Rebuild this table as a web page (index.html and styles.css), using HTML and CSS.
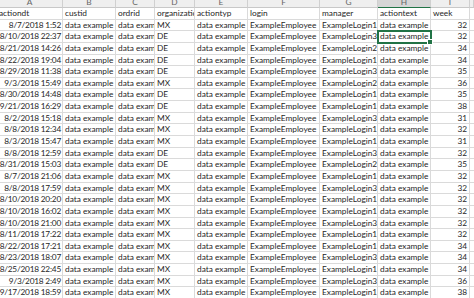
FILE: index.html
```html
<!DOCTYPE html>
<html>
<head>
<meta charset="utf-8">
<link rel="stylesheet" href="styles.css">
</head>
<body>
<div class="sheet">
  <div class="h">A</div><div class="h">B</div><div class="h">C</div><div class="h">D</div><div class="h">E</div><div class="h">F</div><div class="h">G</div><div class="h act">H</div><div class="h">I</div><div class="h"></div>

  <div class="c">actiondt</div><div class="c">custid</div><div class="c">ordrid</div><div class="c">organization</div><div class="c">actiontyp</div><div class="c">login</div><div class="c">manager</div><div class="c">actiontext</div><div class="c">week</div><div class="c"></div>

  <div class="c d">8/7/2018 1:52</div><div class="c">data example</div><div class="c">data example</div><div class="c">MX</div><div class="c r">data example</div><div class="c">ExampleEmployee</div><div class="c">ExampleLogin1</div><div class="c">data example</div><div class="c r">32</div><div class="c"></div>
  <div class="c d">8/10/2018 22:37</div><div class="c">data example</div><div class="c">data example</div><div class="c">DE</div><div class="c r">data example</div><div class="c">ExampleEmployee</div><div class="c">ExampleLogin3</div><div class="c sel">data example</div><div class="c r">32</div><div class="c"></div>
  <div class="c d">8/21/2018 14:26</div><div class="c">data example</div><div class="c">data example</div><div class="c">DE</div><div class="c r">data example</div><div class="c">ExampleEmployee</div><div class="c">ExampleLogin2</div><div class="c">data example</div><div class="c r">34</div><div class="c"></div>
  <div class="c d">8/22/2018 19:04</div><div class="c">data example</div><div class="c">data example</div><div class="c">DE</div><div class="c r">data example</div><div class="c">ExampleEmployee</div><div class="c">ExampleLogin1</div><div class="c">data example</div><div class="c r">34</div><div class="c"></div>
  <div class="c d">8/29/2018 11:38</div><div class="c">data example</div><div class="c">data example</div><div class="c">DE</div><div class="c r">data example</div><div class="c">ExampleEmployee</div><div class="c">ExampleLogin3</div><div class="c">data example</div><div class="c r">35</div><div class="c"></div>
  <div class="c d">9/3/2018 15:49</div><div class="c">data example</div><div class="c">data example</div><div class="c">MX</div><div class="c r">data example</div><div class="c">ExampleEmployee</div><div class="c">ExampleLogin2</div><div class="c">data example</div><div class="c r">36</div><div class="c"></div>
  <div class="c d">8/30/2018 14:48</div><div class="c">data example</div><div class="c">data example</div><div class="c">DE</div><div class="c r">data example</div><div class="c">ExampleEmployee</div><div class="c">ExampleLogin1</div><div class="c">data example</div><div class="c r">35</div><div class="c"></div>
  <div class="c d">9/21/2018 16:29</div><div class="c">data example</div><div class="c">data example</div><div class="c">DE</div><div class="c r">data example</div><div class="c">ExampleEmployee</div><div class="c">ExampleLogin1</div><div class="c">data example</div><div class="c r">38</div><div class="c"></div>
  <div class="c d">8/2/2018 15:18</div><div class="c">data example</div><div class="c">data example</div><div class="c">MX</div><div class="c r">data example</div><div class="c">ExampleEmployee</div><div class="c">ExampleLogin3</div><div class="c">data example</div><div class="c r">31</div><div class="c"></div>
  <div class="c d">8/8/2018 12:34</div><div class="c">data example</div><div class="c">data example</div><div class="c">MX</div><div class="c r">data example</div><div class="c">ExampleEmployee</div><div class="c">ExampleLogin1</div><div class="c">data example</div><div class="c r">32</div><div class="c"></div>
  <div class="c d">8/3/2018 15:47</div><div class="c">data example</div><div class="c">data example</div><div class="c">MX</div><div class="c r">data example</div><div class="c">ExampleEmployee</div><div class="c">ExampleLogin1</div><div class="c">data example</div><div class="c r">31</div><div class="c"></div>
  <div class="c d">8/8/2018 12:59</div><div class="c">data example</div><div class="c">data example</div><div class="c">DE</div><div class="c r">data example</div><div class="c">ExampleEmployee</div><div class="c">ExampleLogin3</div><div class="c">data example</div><div class="c r">32</div><div class="c"></div>
  <div class="c d">8/31/2018 15:03</div><div class="c">data example</div><div class="c">data example</div><div class="c">DE</div><div class="c r">data example</div><div class="c">ExampleEmployee</div><div class="c">ExampleLogin2</div><div class="c">data example</div><div class="c r">35</div><div class="c"></div>
  <div class="c d">8/7/2018 21:06</div><div class="c">data example</div><div class="c">data example</div><div class="c">MX</div><div class="c r">data example</div><div class="c">ExampleEmployee</div><div class="c">ExampleLogin1</div><div class="c">data example</div><div class="c r">32</div><div class="c"></div>
  <div class="c d">8/8/2018 17:59</div><div class="c">data example</div><div class="c">data example</div><div class="c">MX</div><div class="c r">data example</div><div class="c">ExampleEmployee</div><div class="c">ExampleLogin3</div><div class="c">data example</div><div class="c r">32</div><div class="c"></div>
  <div class="c d">8/10/2018 20:20</div><div class="c">data example</div><div class="c">data example</div><div class="c">MX</div><div class="c r">data example</div><div class="c">ExampleEmployee</div><div class="c">ExampleLogin1</div><div class="c">data example</div><div class="c r">32</div><div class="c"></div>
  <div class="c d">8/10/2018 16:02</div><div class="c">data example</div><div class="c">data example</div><div class="c">MX</div><div class="c r">data example</div><div class="c">ExampleEmployee</div><div class="c">ExampleLogin1</div><div class="c">data example</div><div class="c r">32</div><div class="c"></div>
  <div class="c d">8/10/2018 21:00</div><div class="c">data example</div><div class="c">data example</div><div class="c">MX</div><div class="c r">data example</div><div class="c">ExampleEmployee</div><div class="c">ExampleLogin3</div><div class="c">data example</div><div class="c r">32</div><div class="c"></div>
  <div class="c d">8/11/2018 17:22</div><div class="c">data example</div><div class="c">data example</div><div class="c">MX</div><div class="c r">data example</div><div class="c">ExampleEmployee</div><div class="c">ExampleLogin1</div><div class="c">data example</div><div class="c r">32</div><div class="c"></div>
  <div class="c d">8/22/2018 17:21</div><div class="c">data example</div><div class="c">data example</div><div class="c">MX</div><div class="c r">data example</div><div class="c">ExampleEmployee</div><div class="c">ExampleLogin1</div><div class="c">data example</div><div class="c r">34</div><div class="c"></div>
  <div class="c d">8/23/2018 18:07</div><div class="c">data example</div><div class="c">data example</div><div class="c">MX</div><div class="c r">data example</div><div class="c">ExampleEmployee</div><div class="c">ExampleLogin3</div><div class="c">data example</div><div class="c r">34</div><div class="c"></div>
  <div class="c d">8/25/2018 22:45</div><div class="c">data example</div><div class="c">data example</div><div class="c">MX</div><div class="c r">data example</div><div class="c">ExampleEmployee</div><div class="c">ExampleLogin1</div><div class="c">data example</div><div class="c r">34</div><div class="c"></div>
  <div class="c d">9/3/2018 2:49</div><div class="c">data example</div><div class="c">data example</div><div class="c">MX</div><div class="c r">data example</div><div class="c">ExampleEmployee</div><div class="c">ExampleLogin3</div><div class="c">data example</div><div class="c r">36</div><div class="c"></div>
  <div class="c d">9/17/2018 18:59</div><div class="c">data example</div><div class="c">data example</div><div class="c">MX</div><div class="c r">data example</div><div class="c">ExampleEmployee</div><div class="c">ExampleLogin1</div><div class="c">data example</div><div class="c r">38</div><div class="c"></div>
</div>
</body>
</html>
```
FILE: styles.css
```css
html, body {
  margin: 0;
  padding: 0;
  background: #ffffff;
  overflow: hidden;
}

.sheet {
  display: grid;
  grid-template-columns: 66px 53px 39px 40px 53px 72px 58px 53px 39px 4px;
  grid-template-rows: 11px;
  grid-auto-rows: 11.65px;
  margin: -3px 0 0 -3px;
  font-family: Lato, "Liberation Sans", sans-serif;
  font-size: 8.3px;
  color: #262626;
}

.h {
  background: #efefef;
  color: #666666;
  text-align: center;
  line-height: 10px;
  border-right: 1px solid #d0d0d0;
  border-bottom: 1px solid #c8c8c8;
}

.h.act {
  background: #d6d6d6;
  border-bottom: 1px solid #217346;
}

.c {
  border-right: 1px solid #dadada;
  border-bottom: 1px solid #dadada;
  padding: 0 2px;
  line-height: 10.65px;
  white-space: nowrap;
  overflow: hidden;
  min-width: 0;
}

.r {
  text-align: right;
}

.d {
  text-align: right;
  padding-right: 1px;
  letter-spacing: -0.22px;
}

.sel {
  position: relative;
  overflow: visible;
  outline: 2px solid #217346;
  outline-offset: -1px;
  z-index: 1;
}

.sel::after {
  content: "";
  position: absolute;
  right: -3px;
  bottom: -3px;
  width: 4px;
  height: 4px;
  background: #217346;
  border: 1px solid #ffffff;
}
```
